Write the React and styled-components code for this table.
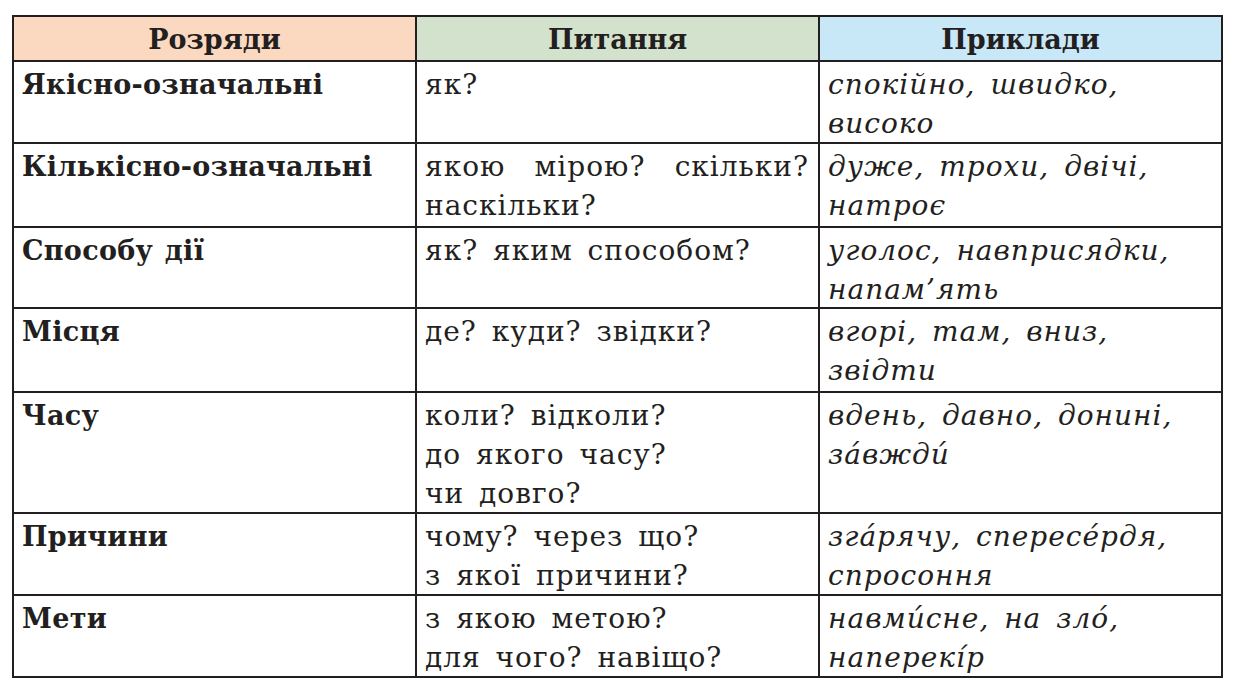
import React from 'react';
import styled, { createGlobalStyle } from 'styled-components';

const GlobalStyle = createGlobalStyle`
  html, body { margin: 0; padding: 0; background: #fff; }
  body { font-family: "DejaVu Serif", "Liberation Serif", serif; color: #231f20; }
`;

const Page = styled.div`
  padding: 15px 0 0 12px;
`;

const Table = styled.div`
  display: grid;
  width: 1211px;
  grid-template-columns: repeat(3, 401px);
  grid-template-rows: 43px 80px 82px 79px 82px 119px 80px 80px;
  gap: 2px;
  padding: 2px;
  box-sizing: border-box;
  background: #231f20;
`;

const Head = styled.div`
  display: flex;
  align-items: center;
  justify-content: center;
  background: ${p => p.$bg};
  font-weight: bold;
  font-size: 27px;
  padding-top: 2px;
`;

const Cell = styled.div`
  background: #fff;
  padding: 3px 9px 0 8px;
  font-size: 28px;
  line-height: 39px;
  letter-spacing: 1px;
  word-spacing: 5px;
`;

const NameCell = styled(Cell)`
  font-weight: bold;
  font-size: 27px;
  letter-spacing: 0.3px;
  word-spacing: 2px;
`;

const ExampleCell = styled(Cell)`
  font-style: italic;
`;

const Spread = styled.div`
  display: flex;
  justify-content: space-between;
`;

const rows = [
  { name: 'Якісно-означальні', q: ['як?'], ex: ['спокійно, швидко,', 'високо'] },
  { name: 'Кількісно-означальні', q: ['якою мірою? скільки?', 'наскільки?'], spread: true, ex: ['дуже, трохи, двічі,', 'натроє'] },
  { name: 'Способу дії', q: ['як? яким способом?'], ex: ['уголос, навприсядки,', 'напам’ять'] },
  { name: 'Місця', q: ['де? куди? звідки?'], ex: ['вгорі, там, вниз,', 'звідти'] },
  { name: 'Часу', q: ['коли? відколи?', 'до якого часу?', 'чи довго?'], ex: ['вдень, давно, донині,', 'зáвждú'] },
  { name: 'Причини', q: ['чому? через що?', 'з якої причини?'], ex: ['згáрячу, спересéрдя,', 'спросоння'] },
  { name: 'Мети', q: ['з якою метою?', 'для чого? навіщо?'], ex: ['навмúсне, на злó,', 'наперекíр'] },
];

const Lines = ({ items, spread }) =>
  items.map((t, i) =>
    spread && i === 0 ? (
      <Spread key={i}>
        {t.split(' ').map((w, j) => <span key={j}>{w}</span>)}
      </Spread>
    ) : (
      <div key={i}>{t}</div>
    )
  );

export default function App() {
  return (
    <Page>
      <GlobalStyle />
      <Table>
        <Head $bg="#fbd9c1">Розряди</Head>
        <Head $bg="#d3e2cc">Питання</Head>
        <Head $bg="#c8e7f7">Приклади</Head>
        {rows.map(r => (
          <React.Fragment key={r.name}>
            <NameCell>{r.name}</NameCell>
            <Cell><Lines items={r.q} spread={r.spread} /></Cell>
            <ExampleCell><Lines items={r.ex} /></ExampleCell>
          </React.Fragment>
        ))}
      </Table>
    </Page>
  );
}
